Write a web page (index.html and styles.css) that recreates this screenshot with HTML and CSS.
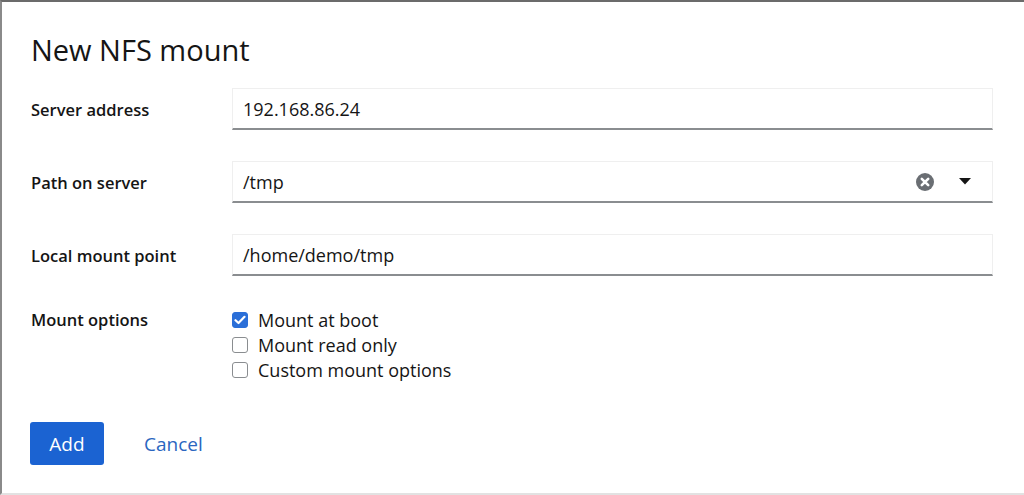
FILE: index.html
```html
<!DOCTYPE html>
<html>
<head>
<meta charset="utf-8">
<link rel="stylesheet" href="styles.css">
</head>
<body>
<div class="dialog">
  <h1 class="title">New NFS mount</h1>
  <div class="form">
    <label class="label">Server address</label>
    <div class="input"><span class="value">192.168.86.24</span></div>

    <label class="label">Path on server</label>
    <div class="input select">
      <span class="value">/tmp</span>
      <span class="controls">
        <svg class="clear" width="18" height="18" viewBox="0 0 18 18"><circle cx="9" cy="9" r="9" fill="#6a6e73"/><path d="M5.8 5.8 L12.2 12.2 M12.2 5.8 L5.8 12.2" stroke="#fff" stroke-width="2.6" stroke-linecap="round"/></svg>
        <svg class="caret" width="12" height="7" viewBox="0 0 12 7"><path d="M0 0 H12 L6 6.5 Z" fill="#151515"/></svg>
      </span>
    </div>

    <label class="label">Local mount point</label>
    <div class="input"><span class="value">/home/demo/tmp</span></div>

    <label class="label label-top">Mount options</label>
    <div class="checks">
      <div class="check"><span class="box checked"><svg width="12" height="10" viewBox="0 0 12 10"><path d="M1.5 5.2 L4.5 8 L10.5 1.8" fill="none" stroke="#fff" stroke-width="2.2" stroke-linecap="round" stroke-linejoin="round"/></svg></span>Mount at boot</div>
      <div class="check"><span class="box"></span>Mount read only</div>
      <div class="check"><span class="box"></span>Custom mount options</div>
    </div>
  </div>
  <div class="actions">
    <button class="btn primary">Add</button>
    <button class="btn link">Cancel</button>
  </div>
</div>
</body>
</html>
```

FILE: styles.css
```css
html, body {
  margin: 0;
  padding: 0;
  background: #fff;
}
body {
  font-family: "Open Sans", "Liberation Sans", sans-serif;
  color: #151515;
}
.dialog {
  box-sizing: border-box;
  width: 1024px;
  height: 495px;
  border-top: 2px solid #6b6b6b;
  border-left: 2px solid #8a8a8a;
  border-bottom: 2px solid #e2e2e2;
  padding: 30px 31px 0 29px;
}
.title {
  margin: 0;
  font-size: 29px;
  font-weight: 500;
  line-height: 36px;
  letter-spacing: 0;
}
.form {
  margin-top: 20px;
  display: grid;
  grid-template-columns: 201px 1fr;
  row-gap: 31px;
  align-items: center;
}
.label {
  font-size: 16.5px;
  font-weight: 600;
}
.label-top {
  align-self: start;
  margin-top: 1px;
}
.input {
  box-sizing: border-box;
  height: 42px;
  border: 1px solid #efefef;
  border-bottom: 2px solid #8a8d90;
  display: flex;
  align-items: center;
  padding: 0 10px;
  font-size: 18px;
}
.select {
  justify-content: space-between;
  padding-right: 21px;
}
.controls {
  display: flex;
  align-items: center;
  gap: 25px;
}
.clear { display: block; }
.caret { display: block; margin-top: -1px; }
.checks {
  display: flex;
  flex-direction: column;
  margin-top: 0;
}
.check {
  display: flex;
  align-items: center;
  height: 25px;
  font-size: 18px;
}
.box {
  box-sizing: border-box;
  width: 16px;
  height: 16px;
  border: 1px solid #8a8d90;
  border-radius: 3px;
  margin-right: 10px;
  display: flex;
  align-items: center;
  justify-content: center;
}
.box.checked {
  background: #2b6fd8;
  border-color: #2b6fd8;
}
.actions {
  margin-top: 40px;
  display: flex;
  align-items: center;
  gap: 30px;
  margin-left: -1px;
}
.btn {
  font-family: "Open Sans", "Liberation Sans", sans-serif;
  font-size: 19px;
  border: none;
  cursor: pointer;
}
.primary {
  width: 74px;
  height: 43px;
  background: #1b63d2;
  color: #fff;
  border-radius: 3px;
}
.link {
  background: none;
  color: #2a66c0;
  padding: 0 10px;
}
```
